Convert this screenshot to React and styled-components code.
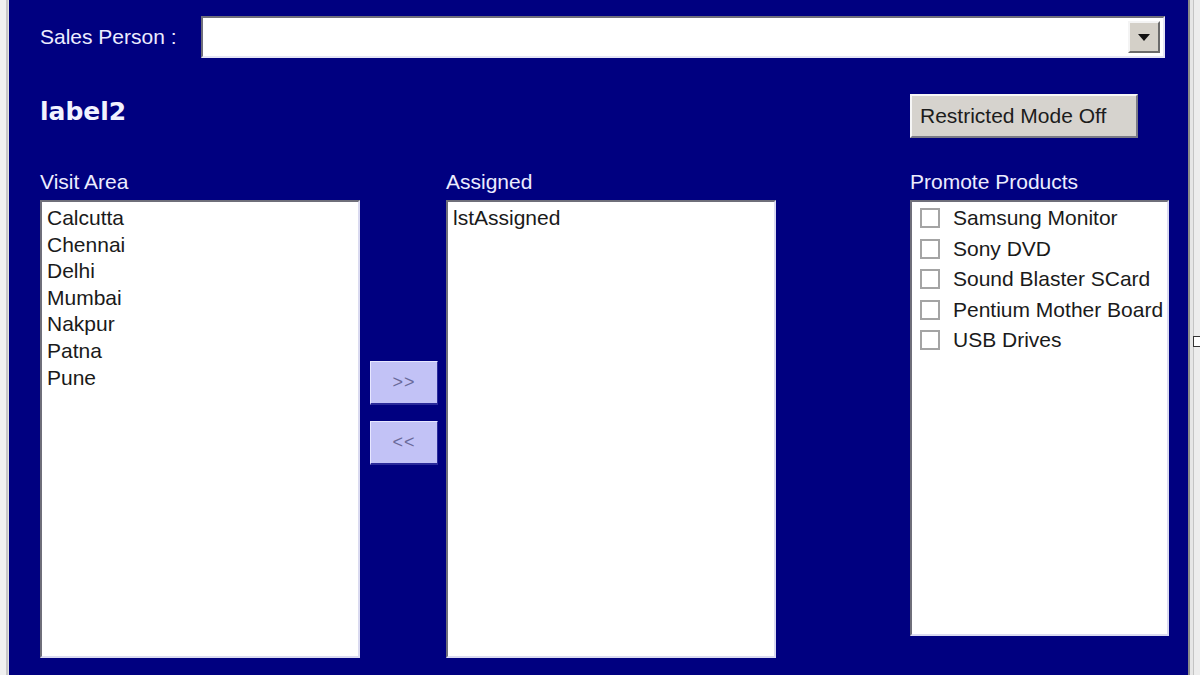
import React from 'react';
import styled, { createGlobalStyle } from 'styled-components';

const GlobalStyle = createGlobalStyle`
    html, body {
        margin: 0;
        padding: 0;
        background: #ececec;
    }
    body {
        font-family: "Liberation Sans", Arial, sans-serif;
    }
`;

const WINDOW = styled.div`
    display: flex;
    width: 1200px;
    height: 675px;
    overflow: hidden;
`;

const LEFT_EDGE = styled.div`
    width: 9px;
    flex: none;
    background: linear-gradient(to right, #f0f0f0 0 6px, #c8c8c8 6px 8px, #e0e0e0 8px);
`;

const RIGHT_EDGE = styled.div`
    width: 12px;
    flex: none;
    display: flex;
    flex-direction: column;
    align-items: flex-end;
    background: linear-gradient(to right, #8a8a8a 0 2px, #e6e6e6 2px 5px, #c4c4c4 5px 6px, #ededed 6px);
`;

const EDGE_MARK = styled.span`
    margin-top: 336px;
    width: 6px;
    height: 9px;
    border: 1px solid #333;
    border-right: none;
    background: #fff;
`;

const FORM = styled.div`
    flex: 1;
    background: #000080;
    padding: 16px 0 0 31px;
    color: #ececff;
    font-size: 21px;
`;

const ROW = styled.div`
    display: flex;
    align-items: ${props => props.align || 'center'};
    justify-content: ${props => props.justify || 'flex-start'};
    margin-top: ${props => props.top || 0}px;
    padding-right: ${props => props.right || 0}px;
`;

const LABEL = styled.div`
    width: ${props => props.width || 'auto'};
    flex: none;
    line-height: 24px;
    white-space: nowrap;
`;

const TITLE = styled.div`
    font-family: "DejaVu Sans", sans-serif;
    font-weight: bold;
    font-size: 25px;
    margin-top: 3px;
    color: #f2f2ff;
`;

const COMBO = styled.div`
    width: 964px;
    height: 42px;
    box-sizing: border-box;
    background: #fff;
    border-top: 2px solid #6f6f7a;
    border-left: 2px solid #6f6f7a;
    border-bottom: 2px solid #e4e4f4;
    border-right: 2px solid #e4e4f4;
    display: flex;
    justify-content: flex-end;
    align-items: center;
    padding-right: 3px;
`;

const DROP_BTN = styled.div`
    width: 32px;
    height: 32px;
    box-sizing: border-box;
    background: #d4d0c8;
    border-top: 2px solid #f4f4f4;
    border-left: 2px solid #f4f4f4;
    border-bottom: 2px solid #6a6a6a;
    border-right: 2px solid #6a6a6a;
    display: flex;
    align-items: center;
    justify-content: center;
`;

const GREY_BUTTON = styled.div`
    width: 228px;
    height: 44px;
    box-sizing: border-box;
    background: #d6d3ce;
    color: #1c1c1c;
    border-top: 2px solid #f6f6f6;
    border-left: 2px solid #f6f6f6;
    border-bottom: 2px solid #7a7a86;
    border-right: 2px solid #7a7a86;
    padding-left: 8px;
    display: flex;
    align-items: center;
    white-space: nowrap;
`;

const LISTS = styled.div`
    display: grid;
    grid-template-columns: 330px 76px 464px 259px;
    grid-template-rows: auto auto;
    row-gap: 6px;
    margin-top: 32px;
`;

const LIST_BOX = styled.div`
    width: ${props => props.width}px;
    height: ${props => props.height}px;
    box-sizing: border-box;
    background: #fff;
    color: #1a1a1a;
    border-top: 2px solid #6f6f7a;
    border-left: 2px solid #6f6f7a;
    border-bottom: 2px solid #dadaf0;
    border-right: 2px solid #dadaf0;
    padding: ${props => props.pad || '3px 0 0 5px'};
`;

const ITEM = styled.div`
    line-height: 26.6px;
    white-space: nowrap;
`;

const MOVE_COL = styled.div`
    display: flex;
    flex-direction: column;
    gap: 16px;
    padding-top: 161px;
`;

const MOVE_BUTTON = styled.div`
    width: 68px;
    height: 44px;
    box-sizing: border-box;
    background: #c2c2f6;
    color: #6a6a9a;
    border-top: 1px solid #e6e6ff;
    border-left: 1px solid #e6e6ff;
    border-bottom: 2px solid #2a2a9a;
    border-right: 1px solid #2a2a9a;
    display: flex;
    align-items: center;
    justify-content: center;
    font-size: 18px;
    letter-spacing: 1px;
`;

const CHECK_ROW = styled.div`
    display: flex;
    align-items: center;
    height: 30.5px;
    white-space: nowrap;
`;

const CHECK = styled.span`
    width: 20px;
    height: 20px;
    flex: none;
    box-sizing: border-box;
    border: 2px solid #a4a4a4;
    background: #fff;
    margin-right: 13px;
`;

const areas = ['Calcutta', 'Chennai', 'Delhi', 'Mumbai', 'Nakpur', 'Patna', 'Pune'];
const products = ['Samsung Monitor', 'Sony DVD', 'Sound Blaster SCard', 'Pentium Mother Board', 'USB Drives'];

export default function App() {
    return (
        <WINDOW>
            <GlobalStyle />
            <LEFT_EDGE />
            <FORM>
                <ROW>
                    <LABEL width="161px">Sales Person :</LABEL>
                    <COMBO>
                        <DROP_BTN>
                            <svg width="12" height="7" viewBox="0 0 12 7">
                                <path d="M0 0h12L6 7z" fill="#111" />
                            </svg>
                        </DROP_BTN>
                    </COMBO>
                </ROW>
                <ROW top={36} align="flex-start" justify="space-between" right={50}>
                    <TITLE>label2</TITLE>
                    <GREY_BUTTON>Restricted Mode Off</GREY_BUTTON>
                </ROW>
                <LISTS>
                    <LABEL>Visit Area</LABEL>
                    <div />
                    <LABEL>Assigned</LABEL>
                    <LABEL>Promote Products</LABEL>
                    <LIST_BOX width={320} height={458}>
                        {areas.map(a => (
                            <ITEM key={a}>{a}</ITEM>
                        ))}
                    </LIST_BOX>
                    <MOVE_COL>
                        <MOVE_BUTTON>&gt;&gt;</MOVE_BUTTON>
                        <MOVE_BUTTON>&lt;&lt;</MOVE_BUTTON>
                    </MOVE_COL>
                    <LIST_BOX width={330} height={458}>
                        <ITEM>lstAssigned</ITEM>
                    </LIST_BOX>
                    <LIST_BOX width={259} height={436} pad="1px 0 0 8px">
                        {products.map(p => (
                            <CHECK_ROW key={p}>
                                <CHECK />
                                {p}
                            </CHECK_ROW>
                        ))}
                    </LIST_BOX>
                </LISTS>
            </FORM>
            <RIGHT_EDGE>
                <EDGE_MARK />
            </RIGHT_EDGE>
        </WINDOW>
    );
}
